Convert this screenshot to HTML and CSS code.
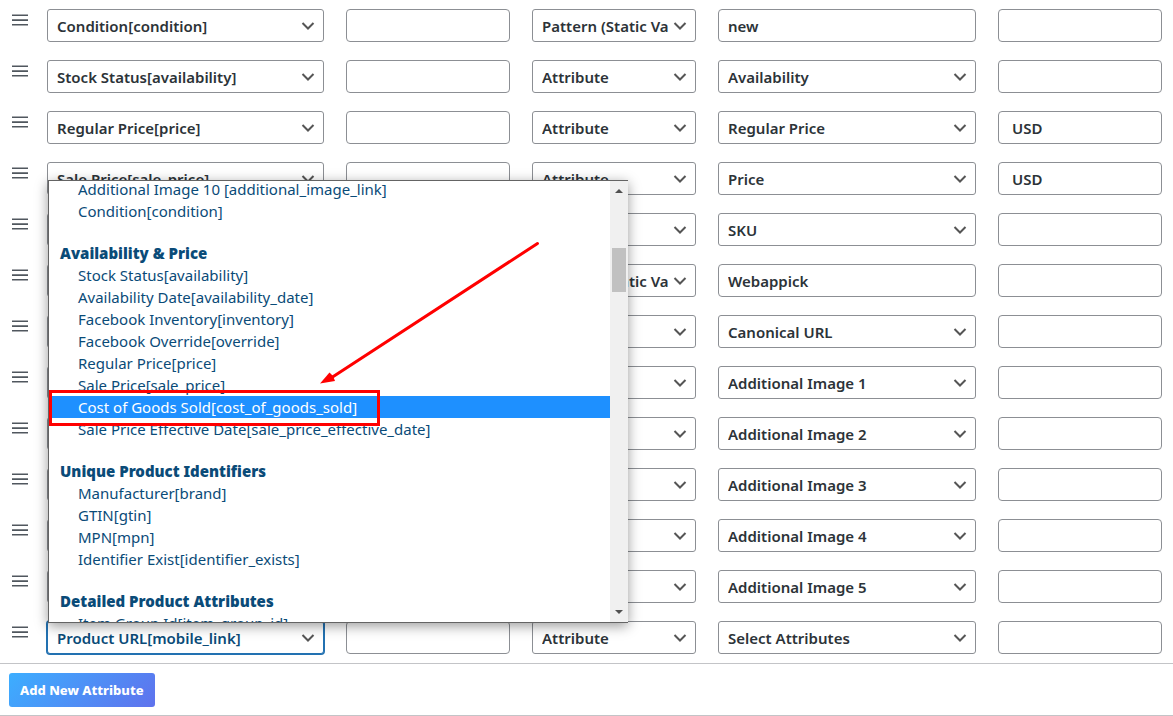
FILE: index.html
```
<!DOCTYPE html>
<html lang="en">
<head>
<meta charset="utf-8">
<meta name="viewport" content="width=device-width, initial-scale=1">
<title>Feed attributes</title>
<link rel="stylesheet" href="styles.css">
</head>
<body>
<svg class="sprite" aria-hidden="true">
  <symbol id="grip" viewBox="0 0 16 12"><path d="M0 .5h16V2H0zM0 5.200h16V7H0zM0 10h16v1.500H0z"/></symbol>
</svg>
<form class="mapping">
  <div class="rows" id="rows"></div>
  <footer class="footer"><button type="button" class="add">Add New Attribute</button></footer>
</form>
<template id="menu">
  <div class="menu">
    <div class="list" role="listbox" aria-label="Product attributes">
      <div class="group" role="group">
        <div class="option" role="option">Additional Image 10 [additional_image_link]</div>
        <div class="option" role="option">Condition[condition]</div>
      </div>
      <div class="group" role="group">
        <div class="heading">Availability &amp; Price</div>
        <div class="option" role="option">Stock Status[availability]</div>
        <div class="option" role="option">Availability Date[availability_date]</div>
        <div class="option" role="option">Facebook Inventory[inventory]</div>
        <div class="option" role="option">Facebook Override[override]</div>
        <div class="option" role="option">Regular Price[price]</div>
        <div class="option" role="option">Sale Price[sale_price]</div>
        <div class="option active" role="option" aria-selected="true">Cost of Goods Sold[cost_of_goods_sold]
          <span class="callout"></span>
          <svg class="arrow" viewBox="0 0 224 146" aria-hidden="true"><path d="M220.500 3.500L14 138" stroke="#f00" stroke-width="3" stroke-linecap="round"/><path d="M3 143.500L12.500 132.500L16 136L18 141Z" fill="#f00"/></svg>
        </div>
        <div class="option" role="option">Sale Price Effective Date[sale_price_effective_date]</div>
      </div>
      <div class="group" role="group">
        <div class="heading">Unique Product Identifiers</div>
        <div class="option" role="option">Manufacturer[brand]</div>
        <div class="option" role="option">GTIN[gtin]</div>
        <div class="option" role="option">MPN[mpn]</div>
        <div class="option" role="option">Identifier Exist[identifier_exists]</div>
      </div>
      <div class="group" role="group">
        <div class="heading">Detailed Product Attributes</div>
        <div class="option" role="option">Item Group Id[item_group_id]</div>
      </div>
    </div>
    <div class="scrollbar" aria-hidden="true">
      <svg class="step" viewBox="0 0 18 18"><path d="M5 12L9 8L13 12Z"/></svg>
      <div class="track"><div class="thumb"></div></div>
      <svg class="step" viewBox="0 0 18 18"><path d="M5 6L9 10L13 6Z"/></svg>
    </div>
  </div>
</template>
<script src="rows.js"></script>
</body>
</html>
```
FILE: styles.css
```
* { box-sizing: border-box; }
body { margin: 0; background: #fff; color: #2c3338; font: 15px/22px "Noto Sans", "Open Sans", sans-serif; }
.sprite { display: none; }
.mapping { overflow: hidden; }
.row { display: flex; align-items: flex-start; padding: 9px 11px 9px 0; }
.handle { flex: none; width: 47px; height: 22px; padding: 0 0 0 12px; border: 0; background: none; line-height: 0; cursor: move; }
.handle svg { display: block; width: 16px; height: 12px; fill: #50575e; }
.fields { flex: 1; display: grid; grid-template-columns: 277fr 164fr 164fr 258fr 164fr; gap: 22px; }
.cell { position: relative; min-width: 0; }
.control { display: block; width: 100%; height: 33px; margin: 0; padding: 0 9px; border: 1px solid #8c8f94; border-radius: 4px; background: #fff; color: #2c3338; font: 600 15px/28px "Noto Sans", "Open Sans", sans-serif; outline: 0; }
select.control { appearance: none; padding-right: 26px; border-radius: 3px; background: #fff url("data:image/svg+xml,%3Csvg xmlns='http://www.w3.org/2000/svg' viewBox='0 0 16 16'%3E%3Cpath d='M2.500 5L8 10.500 13.500 5' fill='none' stroke='%23555' stroke-width='2'/%3E%3C/svg%3E") no-repeat right 7px center / 16px 16px; }
.control.suffix { padding-left: 13px; }
select.focused { border-color: #2271b1; box-shadow: 0 0 0 1px #2271b1; color: #0a4b78; }
.footer { padding: 9px 9px 8px; border-top: 1px solid #c3c4c7; border-bottom: 1px solid #c3c4c7; }
.add { display: block; height: 34px; padding: 0 11px; border: 0; border-radius: 3px; background: linear-gradient(135deg, #3caeff, #5f72ed); color: #fff; font: 800 13px/34px "Noto Sans", "Open Sans", sans-serif; }
.menu { position: absolute; z-index: 2; left: 1px; bottom: 31px; width: 580px; height: 443px; display: flex; overflow: hidden; border: 1px solid #646464; border-right: 0; background: #fff; color: #0a4b78; box-shadow: 0 3px 12px rgba(0, 0, 0, .4); }
.list { flex: 1; margin-top: -3px; }
.group { margin-bottom: 20px; }
.heading { padding-left: 11px; font-weight: 900; }
.option { padding-left: 29px; white-space: nowrap; }
.active { position: relative; background: #1e90ff; color: #fff; }
.callout { position: absolute; left: 0; top: -6px; width: 331px; height: 36px; border: 3px solid #f00; }
.arrow { position: absolute; left: 268px; bottom: 32px; width: 224px; height: 146px; fill: none; }
.scrollbar { flex: none; width: 18px; display: flex; flex-direction: column; background: #f0f0f0; }
.step { width: 18px; height: 18px; fill: #505050; }
.track { flex: 1; padding: 49px 2px 0; }
.thumb { height: 44px; background: #c1c1c1; }
```
FILE: rows.js
```
const rows = [
  ["Condition[condition]", "Pattern (Static Value)", "new", ""],
  ["Stock Status[availability]", "Attribute", "Availability", ""],
  ["Regular Price[price]", "Attribute", "Regular Price", "USD"],
  ["Sale Price[sale_price]", "Attribute", "Price", "USD"],
  ["MPN[mpn]", "Attribute", "SKU", ""],
  ["Manufacturer[brand]", "Pattern (Static Value)", "Webappick", ""],
  ["Canonical Link[canonical_link]", "Attribute", "Canonical URL", ""],
  ["Additional Image 1 [additional_image_link]", "Attribute", "Additional Image 1", ""],
  ["Additional Image 2 [additional_image_link]", "Attribute", "Additional Image 2", ""],
  ["Additional Image 3 [additional_image_link]", "Attribute", "Additional Image 3", ""],
  ["Additional Image 4 [additional_image_link]", "Attribute", "Additional Image 4", ""],
  ["Additional Image 5 [additional_image_link]", "Attribute", "Additional Image 5", ""],
  ["Product URL[mobile_link]", "Attribute", "Select Attributes", ""]
];

const select = (label, value, extra = "") =>
  `<div class="cell"><select class="control ${extra}" aria-label="${label}"><option>${value}</option></select></div>`;
const input = (label, value, extra = "") =>
  `<div class="cell"><input class="control ${extra}" type="text" aria-label="${label}" value="${value}"></div>`;

const container = document.getElementById("rows");
container.innerHTML = rows.map(([name, type, value, suffix], i) => `
  <div class="row">
    <button type="button" class="handle" aria-label="Reorder"><svg><use href="#grip"/></svg></button>
    <div class="fields">
      ${select("Attribute name", name, i === rows.length - 1 ? "focused" : "")}
      ${input("Prefix", "")}
      ${select("Type", type)}
      ${type === "Attribute" ? select("Value", value) : input("Value", value)}
      ${input("Suffix", suffix, "suffix")}
    </div>
  </div>`).join("");

container.lastElementChild.querySelector(".cell")
  .append(document.getElementById("menu").content.cloneNode(true));
```
